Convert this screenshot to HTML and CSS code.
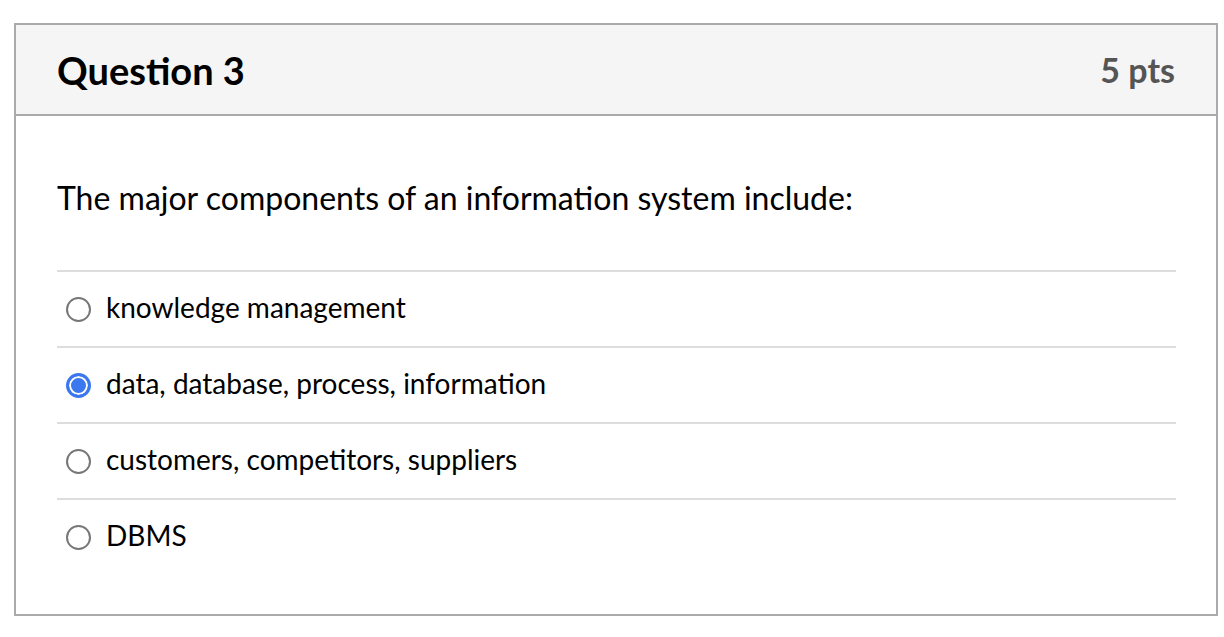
FILE: index.html
```html
<!DOCTYPE html>
<html>
<head>
<meta charset="utf-8">
<link rel="stylesheet" href="styles.css">
</head>
<body>
<div class="question">
  <div class="header">
    <span class="title">Question 3</span>
    <span class="pts">5 pts</span>
  </div>
  <div class="content">
    <p class="text">The major components of an information system include:</p>
    <div class="answers">
      <label class="answer"><span class="radio"></span><span class="label">knowledge management</span></label>
      <label class="answer"><span class="radio checked"></span><span class="label">data, database, process, information</span></label>
      <label class="answer"><span class="radio"></span><span class="label">customers, competitors, suppliers</span></label>
      <label class="answer"><span class="radio"></span><span class="label">DBMS</span></label>
    </div>
  </div>
</div>
</body>
</html>
```
FILE: styles.css
```css
html, body {
  margin: 0;
  padding: 0;
  background: #fff;
}
body {
  font-family: Lato, "Noto Sans", sans-serif;
  color: #000;
  padding: 23px 6px 0 14px;
}
.question {
  width: 1200px;
  height: 589px;
  border: 2px solid #aaaaaa;
  box-sizing: content-box;
}
.header {
  height: 89px;
  background: #f5f5f5;
  border-bottom: 2px solid #aaaaaa;
  display: flex;
  align-items: center;
  justify-content: space-between;
  padding: 0 41px;
}
.title {
  font-size: 38px;
  font-weight: 700;
  color: #000;
}
.pts {
  font-size: 34px;
  font-weight: 700;
  color: #555;
}
.content {
  padding: 0 40px 0 41px;
}
.text {
  margin: 0;
  padding-top: 62px;
  font-size: 32px;
  line-height: 40px;
  height: 92px;
}
.answers {
  display: flex;
  flex-direction: column;
}
.answer {
  display: flex;
  align-items: center;
  gap: 15px;
  height: 74px;
  border-top: 2px solid #dddddd;
  padding-left: 9px;
  font-size: 28px;
}
.radio {
  width: 21px;
  height: 21px;
  border: 2px solid #777;
  border-radius: 50%;
  background: #fff;
  flex: none;
}
.radio.checked {
  width: 19px;
  height: 19px;
  border: 3px solid #3b78f0;
  background: #3b78f0;
  box-shadow: inset 0 0 0 2px #fff;
}
.label {
  padding-bottom: 4px;
}
```
